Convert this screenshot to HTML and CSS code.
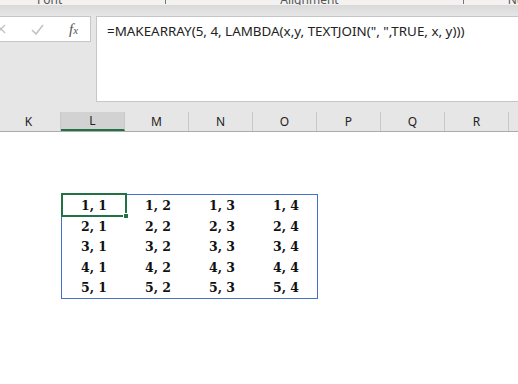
FILE: index.html
```html
<!DOCTYPE html>
<html lang="en">

<head>
    <meta charset="UTF-8">
    <title>MAKEARRAY</title>
    <link rel="stylesheet" href="styles.css">
</head>

<body>
    <div class="ribbon">
        <span class="group-label label-font">Font</span>
        <span class="launcher launcher-font"></span>
        <span class="group-label label-align">Alignment</span>
        <span class="launcher launcher-align"></span>
        <span class="group-label label-num">Nu</span>
    </div>

    <div class="formula-area">
        <div class="name-buttons">
            <svg class="btn-cancel" width="10" height="10" viewBox="0 0 10 10">
                <path d="M1 1 L9 9 M9 1 L1 9" stroke="#c2c2c2" stroke-width="1.3" fill="none" />
            </svg>
            <svg class="btn-enter" width="13" height="11" viewBox="0 0 13 11">
                <path d="M1 6 L5 10 L12 1" stroke="#c2c2c2" stroke-width="1.6" fill="none" />
            </svg>
            <span class="btn-fx"><i>f</i><i class="x">x</i></span>
        </div>
        <div class="formula-box">=MAKEARRAY(5, 4, LAMBDA(x,y, TEXTJOIN(", ",TRUE, x, y)))</div>
    </div>

    <div class="col-headers">
        <div class="col-head">K</div>
        <div class="col-head active">L</div>
        <div class="col-head">M</div>
        <div class="col-head">N</div>
        <div class="col-head">O</div>
        <div class="col-head">P</div>
        <div class="col-head">Q</div>
        <div class="col-head">R</div>
        <div class="col-head">S</div>
    </div>

    <div class="sheet">
        <div class="spill" id="spill">
            <div class="selection"><span class="handle"></span></div>
        </div>
    </div>

    <script>
        // same as MAKEARRAY(5, 4, ...) -> "row, col"
        const spill = document.getElementById('spill');
        for (let r = 1; r <= 5; r++) {
            for (let c = 1; c <= 4; c++) {
                const cell = document.createElement('div');
                cell.className = 'cell';
                cell.textContent = `${r}, ${c}`;
                spill.appendChild(cell);
            }
        }
    </script>
</body>

</html>
```

FILE: styles.css
```css
* {
    margin: 0;
    padding: 0;
    box-sizing: border-box;
}

body {
    width: 518px;
    height: 384px;
    overflow: hidden;
    background: #fff;
    font-family: "Noto Sans", "Open Sans", Arial, sans-serif;
}

/* bottom edge of the ribbon, labels cut off */
.ribbon {
    height: 5px;
    background: #f3f2f1;
    overflow: hidden;
    display: flex;
    align-items: flex-end;
    white-space: nowrap;
    font-size: 12px;
    color: #555;
}

.group-label {
    line-height: 14px;
    margin-bottom: -2px;
}

.label-font {
    margin-left: 37px;
}

.launcher {
    width: 6px;
    height: 6px;
    border-right: 1px solid #777;
    border-bottom: 1px solid #777;
    margin-bottom: 1px;
}

.launcher-font {
    margin-left: 103px;
}

.label-align {
    margin-left: 114px;
}

.launcher-align {
    margin-left: 124px;
}

.label-num {
    margin-left: 44px;
}

.formula-area {
    height: 107px;
    background: linear-gradient(#d9d9d9, #e6e6e6 11px);
    display: flex;
    align-items: flex-start;
    padding-top: 11px;
    gap: 5px;
}

.name-buttons {
    width: 92px;
    height: 26px;
    margin-left: -1px;
    background: #fff;
    border: 1px solid #c6c6c6;
    display: flex;
    align-items: center;
}

.btn-cancel {
    margin-left: -4px;
}

.btn-enter {
    margin-left: 25px;
}

.btn-fx {
    margin-left: 25px;
    color: #555;
    font-family: "Liberation Serif", serif;
    font-size: 15px;
}

.btn-fx .x {
    font-size: 11px;
}

.formula-box {
    flex: 1;
    height: 86px;
    background: #fff;
    border: 1px solid #c6c6c6;
    border-right: none;
    padding: 5px 0 0 10px;
    font-size: 13.4px;
    color: #222;
    white-space: nowrap;
}

.col-headers {
    display: flex;
    height: 20px;
    margin-left: -3px;
    background: #e6e6e6;
    border-bottom: 1px solid #ababab;
}

.col-head {
    flex: 0 0 64px;
    border-right: 1px solid #c8c8c8;
    text-align: center;
    font-size: 12px;
    line-height: 19px;
    color: #222;
}

.col-head.active {
    background: #d2d2d2;
    border-bottom: 2px solid #217346;
    line-height: 18px;
}

.sheet {
    padding: 62px 0 0 61px;
}

.spill {
    position: relative;
    width: 257px;
    display: grid;
    grid-template-columns: repeat(4, 64px);
    grid-auto-rows: 20.6px;
    border: 1px solid #4472c4;
}

.cell {
    text-align: center;
    font-family: "DejaVu Serif", serif;
    font-weight: bold;
    font-size: 12.5px;
    line-height: 21px;
    color: #111;
}

.selection {
    position: absolute;
    left: -1px;
    top: -2px;
    width: 66px;
    height: 24px;
    border: 2px solid #217346;
}

.handle {
    position: absolute;
    right: -4px;
    bottom: -4px;
    width: 6px;
    height: 6px;
    background: #217346;
    border: 1px solid #fff;
}
```
